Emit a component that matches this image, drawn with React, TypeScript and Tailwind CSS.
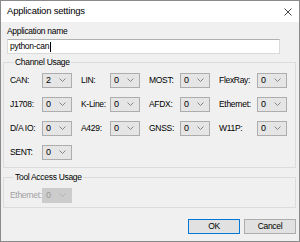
import React from "react";

type Field = { label: string; value: string };

const ROWS: Field[][] = [
  [
    { label: "CAN:", value: "2" },
    { label: "LIN:", value: "0" },
    { label: "MOST:", value: "0" },
    { label: "FlexRay:", value: "0" },
  ],
  [
    { label: "J1708:", value: "0" },
    { label: "K-Line:", value: "0" },
    { label: "AFDX:", value: "0" },
    { label: "Ethernet:", value: "0" },
  ],
  [
    { label: "D/A IO:", value: "0" },
    { label: "A429:", value: "0" },
    { label: "GNSS:", value: "0" },
    { label: "W11P:", value: "0" },
  ],
  [{ label: "SENT:", value: "0" }],
];

function Chevron({ disabled }: { disabled?: boolean }) {
  return (
    <svg width="7" height="4" viewBox="0 0 7 4" className="shrink-0">
      <path
        d="M0.5 0.5 L3.5 3.5 L6.5 0.5"
        fill="none"
        stroke={disabled ? "#b0b0b0" : "#7a7a7a"}
        strokeWidth="0.9"
      />
    </svg>
  );
}

function Combo({ value, disabled }: { value: string; disabled?: boolean }) {
  return (
    <div
      className={
        disabled
          ? "flex h-[15px] w-[30px] items-center justify-between border border-[#cccccc] bg-[#cccccc] pl-[3px] pr-[5px] text-[#9a9a9a]"
          : "flex h-[15px] w-[30px] items-center justify-between border border-[#adadad] bg-[#e5e5e5] pl-[3px] pr-[5px] text-black"
      }
    >
      <span className="text-[9px] leading-none">{value}</span>
      <Chevron disabled={disabled} />
    </div>
  );
}

export default function App() {
  return (
    <div
      className="flex h-[242px] w-[300px] flex-col border border-[#8a8a8a] bg-[#f0f0f0] text-[8.5px] tracking-[-0.3px] text-black"
      style={{ fontFamily: '"Liberation Sans", Arial, sans-serif' }}
    >
      {/* title bar */}
      <div className="flex h-[21px] shrink-0 items-center justify-between bg-white pl-[6px] pr-[7px]">
        <span className="text-[9.5px] tracking-[-0.2px]">Application settings</span>
        <svg width="8" height="8" viewBox="0 0 8 8">
          <path d="M0.5 0.5 L7.5 7.5 M7.5 0.5 L0.5 7.5" stroke="#333" strokeWidth="0.9" />
        </svg>
      </div>

      <div className="flex flex-1 flex-col px-[2px]">
        <div className="pl-[4px] pt-[3px]">
          <div className="leading-[12px]">Application name</div>
          <div className="mt-[2px] flex h-[15px] w-[273px] items-center border border-[#d9d9d9] border-t-[#b0b0b0] bg-white pl-[2px]">
            <span className="leading-none">python-can</span>
            <span className="ml-px h-[10px] w-px bg-black" />
          </div>
        </div>

        <fieldset className="mt-[3px] w-[293px] border border-[#dcdcdc] pb-[3px] pl-[6px]">
          <legend className="ml-[4px] px-[1px] leading-[11px]">Channel Usage</legend>
          <div className="grid grid-cols-[32px_39px_29px_39px_31px_39px_38px_31px] items-center">
            {ROWS.map((row, ri) =>
              row.map((f) => (
                <React.Fragment key={`${ri}-${f.label}`}>
                  <div className="flex h-[24px] items-center">{f.label}</div>
                  <div className="flex h-[24px] items-center">
                    <Combo value={f.value} />
                  </div>
                </React.Fragment>
              ))
            )}
          </div>
        </fieldset>

        <fieldset className="mt-[4px] h-[36px] w-[293px] border border-[#dcdcdc] pl-[6px]">
          <legend className="ml-[4px] px-[1px] leading-[11px]">Tool Access Usage</legend>
          <div className="flex h-[24px] items-center">
            <span className="w-[32px] text-[#a0a0a0]">Ethernet:</span>
            <Combo value="0" disabled />
          </div>
        </fieldset>

        <div className="mt-auto mb-[7px] flex justify-end gap-[4px] pr-px">
          <button className="h-[15px] w-[52px] border border-[#0078d7] bg-[#e1e1e1] leading-none">
            OK
          </button>
          <button className="h-[15px] w-[52px] border border-[#adadad] bg-[#e1e1e1] leading-none">
            Cancel
          </button>
        </div>
      </div>
    </div>
  );
}
